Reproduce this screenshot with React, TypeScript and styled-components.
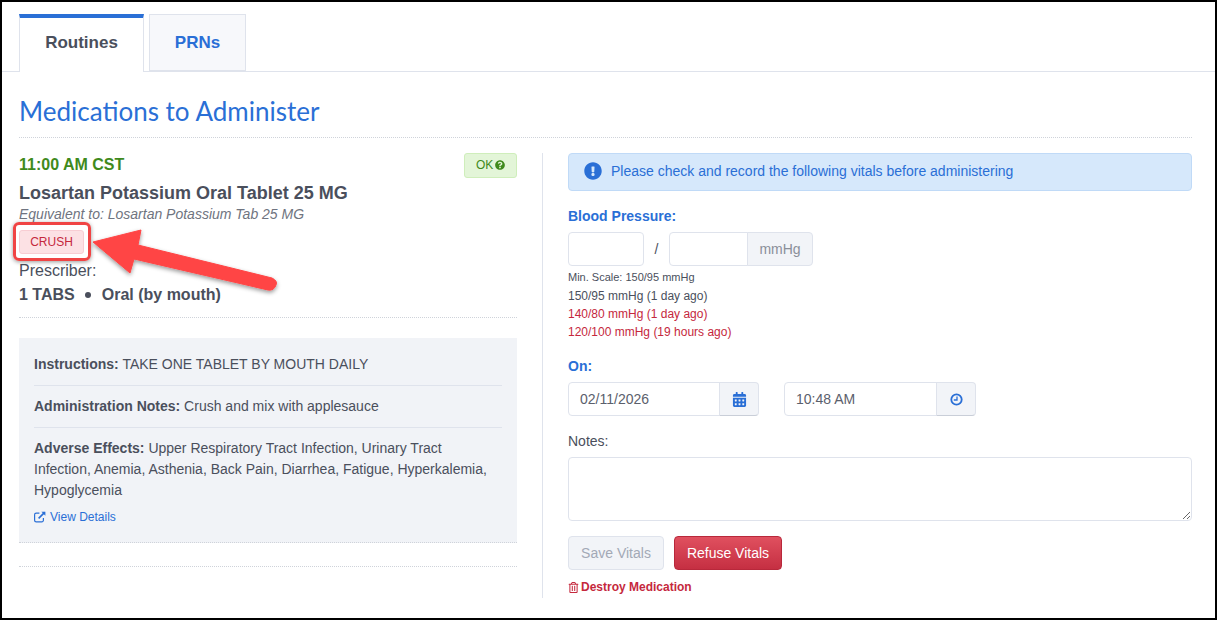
import styled, { createGlobalStyle } from "styled-components";
import {
  FaCalendarAlt,
  FaExclamationCircle,
  FaQuestionCircle,
  FaRegTrashAlt,
} from "react-icons/fa";

const BLUE = "#2a6fd6";
const TEXT = "#4a4f5c";
const RED = "#c5283d";
const LINE = "#dfe3ec";

const GlobalStyle = createGlobalStyle`
  html, body {
    margin: 0;
    padding: 0;
    background: #fff;
    font-family: 'Liberation Sans', Arial, sans-serif;
    font-size: 14px;
    color: ${TEXT};
  }
  * { box-sizing: border-box; }
`;

const Frame = styled.div`
  position: relative;
  width: 1217px;
  height: 620px;
  border: 2px solid #000;
  overflow: hidden;
  background: #fff;
`;

// Tabs
const TabBar = styled.div`
  display: flex;
  gap: 5px;
  height: 70px;
  padding: 12px 0 0 17px;
  border-bottom: 1px solid ${LINE};
`;

const Tab = styled.div<{ $active?: boolean }>`
  height: ${({ $active }) => ($active ? "58px" : "57px")};
  width: ${({ $active }) => ($active ? "125px" : "97px")};
  display: flex;
  align-items: center;
  justify-content: center;
  font-size: 17px;
  font-weight: 700;
  color: ${({ $active }) => ($active ? TEXT : BLUE)};
  background: ${({ $active }) => ($active ? "#fff" : "#f7f8fb")};
  border: 1px solid ${LINE};
  border-top: ${({ $active }) => ($active ? `4px solid ${BLUE}` : `1px solid ${LINE}`)};
  border-bottom: ${({ $active }) => ($active ? "none" : `1px solid ${LINE}`)};
  padding-bottom: ${({ $active }) => ($active ? "4px" : "0")};
`;

const Content = styled.div`
  padding: 0 23px 0 17px;
`;

const PageTitle = styled.h1`
  margin: 0;
  height: 66px;
  padding-top: 21px;
  font-family: Lato, sans-serif;
  font-size: 26px;
  line-height: 36px;
  font-weight: 400;
  color: ${BLUE};
  border-bottom: 1px dotted #cfd3da;
`;

const Columns = styled.div`
  display: flex;
  margin-top: 15px;
`;

// Left column
const LeftColumn = styled.div`
  width: 498px;
  flex: none;
`;

const TimeRow = styled.div`
  display: flex;
  justify-content: space-between;
  height: 25px;
`;

const Time = styled.div`
  font-size: 16px;
  font-weight: 700;
  line-height: 24px;
  color: #3f8a1c;
`;

const OkBadge = styled.div`
  display: flex;
  align-items: center;
  gap: 2px;
  width: 53px;
  height: 25px;
  padding: 0 0 1px 11px;
  font-size: 12px;
  color: #3f8a1c;
  background: #e3f5d8;
  border: 1px solid #cfeebb;
  border-radius: 3px;
`;

const DrugName = styled.div`
  margin-top: 4px;
  font-size: 18px;
  font-weight: 700;
  line-height: 22px;
`;

const Equivalent = styled.div`
  font-size: 14px;
  font-style: italic;
  line-height: 20px;
  color: #6f7480;
`;

const TagRow = styled.div`
  position: relative;
  width: 65px;
  margin-top: 6px;
`;

const CrushTag = styled.div`
  height: 24px;
  display: flex;
  align-items: center;
  justify-content: center;
  font-size: 12px;
  color: ${RED};
  background: #fce1e4;
  border: 1px solid #f8cdd3;
  border-radius: 3px;
`;

const Highlight = styled.div`
  position: absolute;
  left: -6px;
  top: -8px;
  width: 78px;
  height: 39px;
  border: 3px solid #f04444;
  border-radius: 6px;
  box-shadow: 0 1px 4px rgba(0, 0, 0, 0.4);
`;

const Prescriber = styled.div`
  margin-top: 6px;
  font-size: 16px;
  line-height: 22px;
`;

const Dosage = styled.div`
  display: flex;
  gap: 10px;
  align-items: center;
  margin-top: 2px;
  padding-bottom: 11px;
  font-size: 16px;
  font-weight: 700;
  line-height: 22px;
  border-bottom: 1px dotted #cfd3da;
`;

const Dot = styled.span`
  width: 6px;
  height: 6px;
  margin-right: 1px;
  border-radius: 50%;
  background: ${TEXT};
`;

const InfoPanel = styled.div`
  margin-top: 20px;
  padding: 16px 15px 16px;
  background: #f1f3f7;
  border-bottom: 1px dotted #cfd3da;
  line-height: 21px;
`;

const InfoRow = styled.div`
  padding-bottom: 10px;
  margin-bottom: 10px;
  border-bottom: 1px solid ${LINE};

  &:last-of-type {
    border-bottom: none;
    margin-bottom: 0;
    padding-bottom: 7px;
  }

  b { font-weight: 700; }
`;

const DetailsLink = styled.a`
  display: flex;
  align-items: center;
  gap: 4px;
  font-size: 12px;
  line-height: 18px;
  color: ${BLUE};
`;

const EndRule = styled.div`
  margin-top: 23px;
  border-bottom: 1px dotted #cfd3da;
`;

const Divider = styled.div`
  width: 1px;
  flex: none;
  margin: 0 25px;
  background: ${LINE};
`;

// Right column
const RightColumn = styled.div`
  width: 624px;
  flex: none;
  padding-bottom: 3px;
`;

const Alert = styled.div`
  display: flex;
  align-items: center;
  gap: 9px;
  height: 38px;
  padding: 0 0 2px 15px;
  color: ${BLUE};
  background: #d6e8fb;
  border: 1px solid #c0daf7;
  border-radius: 4px;
`;

const FieldLabel = styled.div<{ $plain?: boolean }>`
  font-size: 14px;
  line-height: 20px;
  font-weight: ${({ $plain }) => ($plain ? 400 : 700)};
  color: ${({ $plain }) => ($plain ? TEXT : BLUE)};
`;

const BpLabel = styled(FieldLabel)`
  margin-top: 15px;
  margin-bottom: 6px;
`;

const OnLabel = styled(FieldLabel)`
  margin-top: 17px;
  margin-bottom: 6px;
`;

const NotesLabel = styled(FieldLabel)`
  margin-top: 15px;
  margin-bottom: 6px;
`;

const InputRow = styled.div`
  display: flex;
  align-items: center;
`;

const Input = styled.div<{ $w: number; $joined?: boolean }>`
  width: ${({ $w }) => $w}px;
  height: 34px;
  display: flex;
  align-items: center;
  padding-left: 11px;
  font-size: 14px;
  color: #5b606c;
  background: #fff;
  border: 1px solid ${LINE};
  border-radius: ${({ $joined }) => ($joined ? "4px 0 0 4px" : "4px")};
`;

const Slash = styled.span`
  width: 25px;
  text-align: center;
  font-size: 14px;
`;

const Addon = styled.div<{ $w: number }>`
  width: ${({ $w }) => $w}px;
  height: 34px;
  display: flex;
  align-items: center;
  justify-content: center;
  margin-left: -1px;
  color: #8a8f9a;
  background: #f2f4f8;
  border: 1px solid ${LINE};
  border-radius: 0 4px 4px 0;
`;

const IconAddon = styled(Addon)`
  color: ${BLUE};
  border-bottom-color: #c9ced8;
`;

const ScaleNote = styled.div`
  margin: 4px 0 5px;
  font-size: 11px;
  line-height: 14px;
`;

const Reading = styled.div<{ $alert?: boolean }>`
  margin-bottom: 4px;
  font-size: 12px;
  line-height: 14px;
  color: ${({ $alert }) => ($alert ? RED : TEXT)};
`;

const TimeGroup = styled.div`
  display: flex;
  margin-left: 25px;
`;

const Notes = styled.textarea`
  display: block;
  width: 624px;
  height: 64px;
  padding: 6px 11px;
  background: #fff;
  border: 1px solid ${LINE};
  border-radius: 4px;
  outline: none;
`;

const Actions = styled.div`
  display: flex;
  gap: 10px;
  margin-top: 15px;
`;

const SaveButton = styled.button`
  width: 96px;
  height: 34px;
  font-family: inherit;
  font-size: 14px;
  color: #a3a9b6;
  background: #f2f4f8;
  border: 1px solid ${LINE};
  border-radius: 4px;
`;

const RefuseButton = styled.button`
  width: 108px;
  height: 34px;
  font-family: inherit;
  font-size: 14px;
  color: #fff;
  background: linear-gradient(#e0505f, #c52f42);
  border: 1px solid #b8283b;
  border-radius: 4px;
`;

const DestroyLink = styled.a`
  display: flex;
  align-items: center;
  gap: 2px;
  margin-top: 9px;
  font-size: 12px;
  font-weight: 700;
  line-height: 16px;
  color: ${RED};
`;

// Red arrow from the annotation, lies over the page
const ArrowLayer = styled.svg`
  position: absolute;
  left: -2px;
  top: -2px;
  width: 1217px;
  height: 620px;
  pointer-events: none;
`;

const ExternalIcon = () => (
  <svg width="12" height="12" viewBox="0 0 12 12" fill="none" stroke="currentColor" strokeWidth="1.2">
    <path d="M9.4 7v2.3a1.6 1.6 0 0 1-1.6 1.6H2.2A1.6 1.6 0 0 1 .6 9.3V3.7a1.6 1.6 0 0 1 1.6-1.6h3.2" />
    <path d="M4.6 7.4 10.6 1.4" strokeWidth="1.6" />
    <path d="M7.4.7h4v4z" fill="currentColor" stroke="none" />
  </svg>
);

const ClockIcon = () => (
  <svg width="13" height="13" viewBox="0 0 13 13" fill="none" stroke="currentColor">
    <circle cx="6.5" cy="6.5" r="5.2" strokeWidth="1.8" />
    <path d="M7 3.4v3.6H3.8" strokeWidth="1.3" />
  </svg>
);

export default function App() {
  return (
    <>
      <GlobalStyle />
      <Frame>
        <TabBar>
          <Tab $active>Routines</Tab>
          <Tab>PRNs</Tab>
        </TabBar>
        <Content>
          <PageTitle>Medications to Administer</PageTitle>
          <Columns>
            <LeftColumn>
              <TimeRow>
                <Time>11:00 AM CST</Time>
                <OkBadge>
                  OK <FaQuestionCircle size={10} />
                </OkBadge>
              </TimeRow>
              <DrugName>Losartan Potassium Oral Tablet 25 MG</DrugName>
              <Equivalent>Equivalent to: Losartan Potassium Tab 25 MG</Equivalent>
              <TagRow>
                <CrushTag>CRUSH</CrushTag>
                <Highlight />
              </TagRow>
              <Prescriber>Prescriber:</Prescriber>
              <Dosage>
                1 TABS <Dot /> Oral (by mouth)
              </Dosage>
              <InfoPanel>
                <InfoRow>
                  <b>Instructions:</b> TAKE ONE TABLET BY MOUTH DAILY
                </InfoRow>
                <InfoRow>
                  <b>Administration Notes:</b> Crush and mix with applesauce
                </InfoRow>
                <InfoRow>
                  <b>Adverse Effects:</b> Upper Respiratory Tract Infection, Urinary Tract Infection, Anemia,
                  Asthenia, Back Pain, Diarrhea, Fatigue, Hyperkalemia, Hypoglycemia
                </InfoRow>
                <DetailsLink>
                  <ExternalIcon /> View Details
                </DetailsLink>
              </InfoPanel>
              <EndRule />
            </LeftColumn>
            <Divider />
            <RightColumn>
              <Alert>
                <FaExclamationCircle size={18} />
                Please check and record the following vitals before administering
              </Alert>
              <BpLabel>Blood Pressure:</BpLabel>
              <InputRow>
                <Input $w={76} />
                <Slash>/</Slash>
                <Input $w={79} $joined />
                <Addon $w={66}>mmHg</Addon>
              </InputRow>
              <ScaleNote>Min. Scale: 150/95 mmHg</ScaleNote>
              <Reading>150/95 mmHg (1 day ago)</Reading>
              <Reading $alert>140/80 mmHg (1 day ago)</Reading>
              <Reading $alert>120/100 mmHg (19 hours ago)</Reading>
              <OnLabel>On:</OnLabel>
              <InputRow>
                <Input $w={152} $joined>02/11/2026</Input>
                <IconAddon $w={40}>
                  <FaCalendarAlt size={15} />
                </IconAddon>
                <TimeGroup>
                  <Input $w={153} $joined>10:48 AM</Input>
                  <IconAddon $w={40}>
                    <ClockIcon />
                  </IconAddon>
                </TimeGroup>
              </InputRow>
              <NotesLabel $plain>Notes:</NotesLabel>
              <Notes />
              <Actions>
                <SaveButton>Save Vitals</SaveButton>
                <RefuseButton>Refuse Vitals</RefuseButton>
              </Actions>
              <DestroyLink>
                <FaRegTrashAlt size={11} /> Destroy Medication
              </DestroyLink>
            </RightColumn>
          </Columns>
        </Content>
        <ArrowLayer viewBox="0 0 1217 620">
          <defs>
            <filter id="arrowShadow" x="-10%" y="-10%" width="120%" height="130%">
              <feDropShadow dx="0" dy="2" stdDeviation="2" floodColor="#000" floodOpacity="0.4" />
            </filter>
          </defs>
          <path
            d="M93 242 L141 230 L138 245 L272 278 Q278 281 276 285 Q274 291 268 290 L134 259 L130 273 Z"
            fill="#ff4545"
            stroke="#ff4545"
            strokeWidth="1"
            strokeLinejoin="round"
            filter="url(#arrowShadow)"
          />
        </ArrowLayer>
      </Frame>
    </>
  );
}
